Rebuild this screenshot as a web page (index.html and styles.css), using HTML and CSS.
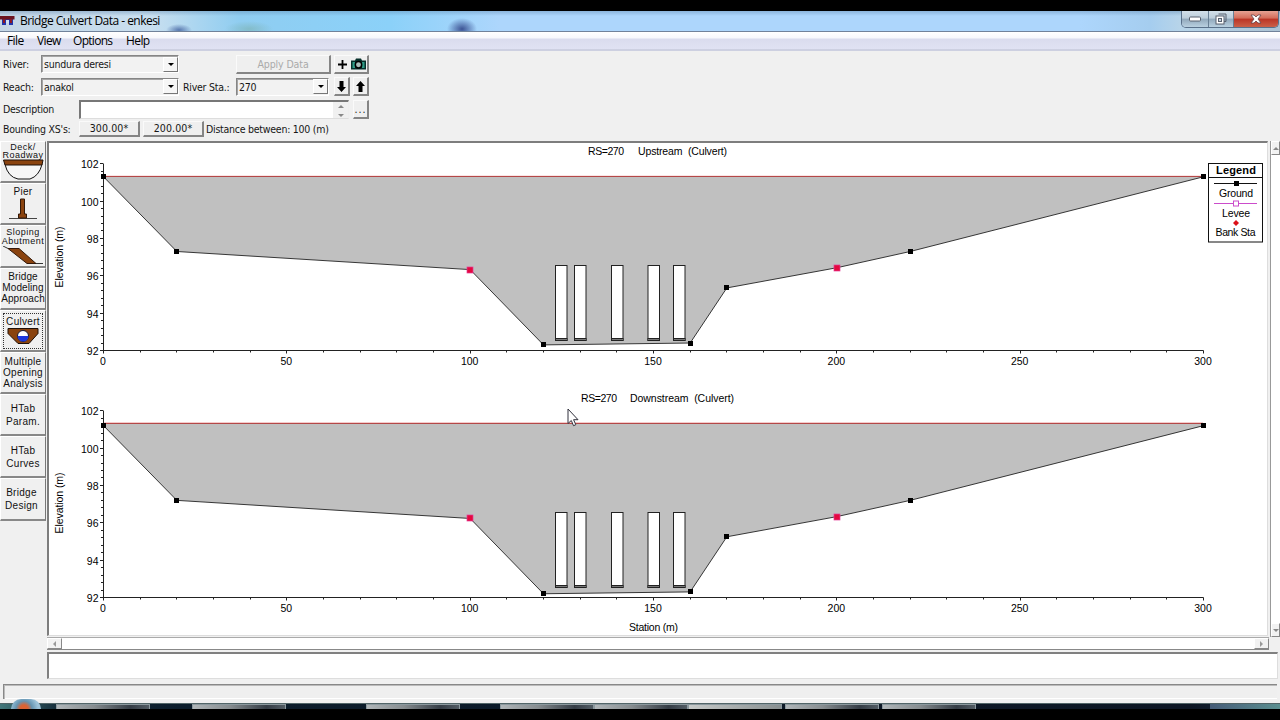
FILE: index.html
```html
<!DOCTYPE html>
<html lang="en">
<head>
    <meta charset="UTF-8" />
    <meta name="viewport" content="width=device-width, initial-scale=1.0" />
    <title>Bridge Culvert Data - enkesi</title>
    <link rel="stylesheet" href="styles.css">
</head>
<body>
    <header class="titlebar">
        <svg class="app-icon" width="15" height="12" viewBox="0 0 15 12">
            <path d="M2 4h11v6H9V7H6v3H2z" fill="#2334a8" />
            <path d="M0 1h14.500v3.500H0z" fill="#6c1420" />
            <path d="M3 4h2v4H3zM10 4h2v4h-2z" fill="#8c1822" />
            <path d="M6 5h3v3H6z" fill="#cfe0f2" />
        </svg>
        <span class="window-title">Bridge Culvert Data - enkesi</span>
        <div class="window-buttons">
            <span class="win-btn">
                <svg width="12" height="6"><rect x="0.5" y="1" width="11" height="4" rx="1" fill="#fff" stroke="#59616f" /></svg>
            </span>
            <span class="win-btn">
                <svg width="12" height="12"><path d="M3.5 1h7.500v7.500H9" fill="none" stroke="#59616f" /><rect x="1" y="3" width="8" height="8" fill="#fff" stroke="#59616f" /><rect x="3.500" y="5.500" width="3" height="3" fill="#c8d4e0" stroke="#59616f" /></svg>
            </span>
            <span class="win-btn close">
                <svg width="12" height="10"><path d="M1 1h3l2 2 2-2h3L8 5l3 4H8L6 7 4 9H1l3-4z" fill="#fff" stroke="#64434a" stroke-width="0.800" /></svg>
            </span>
        </div>
    </header>

    <nav class="menubar">
        <span class="m-file">File</span>
        <span class="m-view">View</span>
        <span class="m-options">Options</span>
        <span class="m-help">Help</span>
    </nav>

    <section class="controls">
        <div class="row">
            <label class="lbl">River:</label>
            <div class="combo">sundura deresi<i class="drop"></i></div>
            <button class="btn apply" disabled>Apply Data</button>
            <button class="btn camera">
                <svg width="31" height="16" viewBox="0 0 31 16">
                    <path d="M2 8.500h9M6.500 4v9" stroke="#000" stroke-width="1.800" />
                    <path d="M15 4.500h4l1-2h5l1 2h4v9H15z" fill="#062f2a" />
                    <path d="M16.500 6h2.500v6h-2.500zM26 6h2.500v6H26z" fill="#2d9c86" />
                    <circle cx="22.500" cy="8.800" r="3.200" fill="#a9bdb9" stroke="#000" stroke-width="1.500" />
                </svg>
            </button>
        </div>
        <div class="row">
            <label class="lbl">Reach:</label>
            <div class="combo">anakol<i class="drop"></i></div>
            <label class="lbl-sta">River Sta.:</label>
            <div class="combo sta">270<i class="drop"></i></div>
            <button class="btn arrow first">
                <svg width="11" height="13"><path d="M3.500 1h4v6H10L5.500 12 1 7h2.500z" /></svg>
            </button>
            <button class="btn arrow">
                <svg width="11" height="13"><path d="M3.500 12h4V6H10L5.500 1 1 6h2.500z" /></svg>
            </button>
        </div>
        <div class="row">
            <label class="lbl wide">Description</label>
            <div class="description">
                <span class="spin"><i class="up"></i><i class="down"></i></span>
            </div>
            <button class="btn dots">...</button>
        </div>
        <div class="row last">
            <label class="lbl wide">Bounding XS's:</label>
            <button class="btn xs">300.00*</button>
            <button class="btn xs">200.00*</button>
            <span class="distance">Distance between: 100 (m)</span>
        </div>
    </section>

    <main>
        <aside class="tools">
            <button class="tool deck">
                <span>Deck/</span>
                <span>Roadway</span>
                <svg width="44" height="22" viewBox="0 0 44 22">
                    <path d="M4 5.500Q7 18 17 20h12Q38 17 41 5.500" fill="#f6f6f6" stroke="#111" />
                    <path d="M2.500 1H42l-1 5H4z" fill="#8a430f" stroke="#1e1008" />
                </svg>
            </button>
            <button class="tool pier">
                <span>Pier</span>
                <svg width="28" height="24" viewBox="0 0 28 24">
                    <path d="M0 21.500h28" stroke="#444" />
                    <path d="M11.500 2h4v15h2v4h-8v-4h2z" fill="#8a430f" stroke="#33190a" />
                </svg>
            </button>
            <button class="tool sloping">
                <span>Sloping</span>
                <span>Abutment</span>
                <svg width="40" height="19" viewBox="0 0 40 19">
                    <path d="M0 0l5 2.500M26 17.500h14" stroke="#333" />
                    <path d="M5 2.500h11l17 15h-9z" fill="#8a430f" stroke="#33190a" />
                </svg>
            </button>
            <button class="tool text3"><span>Bridge<br>Modeling<br>Approach</span></button>
            <button class="tool culvert">
                <span>Culvert</span>
                <svg width="32" height="18" viewBox="0 0 32 18">
                    <path d="M1 1.500h30v5l-9 10H11L1 6.500z" fill="#8a430f" stroke="#1e1008" />
                    <circle cx="16" cy="9" r="5.500" fill="#fff" stroke="#16162e" />
                    <path d="M10.500 9h11a5.500 5.500 0 0 1-11 0z" fill="#1e38dc" />
                </svg>
            </button>
            <button class="tool multi"><span>Multiple<br>Opening<br>Analysis</span></button>
            <button class="tool text2"><span>HTab<br>Param.</span></button>
            <button class="tool text2"><span>HTab<br>Curves</span></button>
            <button class="tool text2 design"><span>Bridge<br>Design</span></button>
        </aside>

        <div class="plot-area">
            <div class="plot-row">
                <svg id="plot" class="plot" viewBox="49 143 1218 492"></svg>
                <div class="vscroll">
                    <span class="scroll-btn"><i class="up"></i></span>
                    <span class="scroll-btn"><i class="down"></i></span>
                </div>
            </div>
            <div class="hscroll">
                <span class="scroll-btn"><i class="left"></i></span>
                <span class="scroll-btn"><i class="right"></i></span>
            </div>
            <div class="message"></div>
        </div>
    </main>

    <footer class="status"></footer>

    <div class="taskbar">
        <span class="orb"></span>
        <span class="task t1"></span>
        <span class="task t2"></span>
        <span class="task t3"></span>
        <span class="task t4"></span>
        <span class="task"></span>
        <span class="task light"></span>
        <span class="task t7"></span>
        <span class="task t7"></span>
        <span class="tray"></span>
    </div>

    <svg class="pointer" width="12" height="20" viewBox="0 0 12 20">
        <path d="M1 1v14.500l3.300-3 2.200 5.200 2.300-1-2.200-5H11z" fill="#fff" stroke="#30303c" />
    </svg>

    <script src="script.js"></script>
</body>
</html>
```

FILE: styles.css
```css
* {
    box-sizing: border-box;
}

body {
    margin: 0;
    width: 1280px;
    height: 720px;
    padding: 11px 0;
    overflow: hidden;
    display: flex;
    flex-direction: column;
    background-color: #000;
    font-family: "DejaVu Sans Condensed", "DejaVu Sans", sans-serif;
    font-stretch: condensed;
    font-size: 10.5px;
    letter-spacing: -0.25px;
    color: #161616;
}

svg {
    display: block;
    flex: none;
}

.titlebar {
    height: 21px;
    flex: none;
    display: flex;
    align-items: flex-start;
    border-bottom: 1px solid #71829a;
    background:
        radial-gradient(ellipse 13px 6px at 179px 19px, rgba(65, 96, 159, 0.8), transparent),
        radial-gradient(ellipse 15px 11px at 462px 18px, #3d5495, transparent),
        radial-gradient(ellipse 24px 8px at 249px 18px, #83bcc9, transparent),
        linear-gradient(rgba(90, 130, 170, 0.4), transparent 5px),
        linear-gradient(90deg, #c3d5e5 0, #c9dfef 150px, #8fcdf1 240px, #8bd1f9 390px, #add6fc 500px, #add6fc 1080px, #a5cdef 1150px, #b7d4e9 1180px, #acc3d4 1280px);
}

.app-icon {
    margin-top: 4px;
}

.window-title {
    margin-left: 5px;
    margin-top: 2px;
    font: 12px/16px "Open Sans", sans-serif;
    letter-spacing: -0.53px;
    color: #000;
}

.window-buttons {
    display: flex;
    margin-left: auto;
    margin-right: 1px;
    height: 17px;
    border: 1px solid #59708a;
    border-top: 0;
    border-radius: 0 0 5px 5px;
    overflow: hidden;
}

.win-btn {
    width: 27px;
    display: flex;
    align-items: center;
    justify-content: center;
    border-right: 1px solid #687f94;
    background: linear-gradient(#d2dfe9, #bccdda 45%, #91a8bb 50%, #b9d0e0);
}

.win-btn + .win-btn {
    width: 25px;
}

.win-btn.close {
    width: 44px;
    border: 0;
    background: linear-gradient(#e5a293, #d36c59 45%, #bb3425 50%, #cb6048);
}

.menubar {
    height: 19px;
    flex: none;
    display: flex;
    padding-left: 7px;
    border-bottom: 2px solid #cdd0e1;
    background: linear-gradient(#fff, #f6f7fc 6px, #dadcee 7px, #e0e2f3);
    font: 12px/18px "Open Sans", sans-serif;
    letter-spacing: -0.6px;
    color: #000;
}

.m-file {
    width: 30px;
}

.m-view {
    width: 36px;
}

.m-options {
    width: 53px;
    letter-spacing: -0.7px;
}

.controls {
    height: 90px;
    flex: none;
    padding: 2px 0 0 3px;
    background-color: #f0f0f0;
}

.row {
    display: flex;
    height: 22.5px;
    align-items: center;
}

.row.last {
    height: 16px;
}

.lbl {
    width: 38px;
    flex: none;
}

.lbl.wide {
    width: 76px;
    white-space: nowrap;
}

.combo {
    width: 138px;
    height: 18px;
    display: flex;
    align-items: center;
    padding-left: 2px;
    border: 1px solid #858585;
    border-right-color: #fff;
    border-bottom-color: #fff;
    box-shadow: inset 1px 1px #a5a5a5;
    background-color: #f2f2f2;
    white-space: nowrap;
}

.drop {
    width: 15px;
    height: 15px;
    margin-left: auto;
    flex: none;
    display: flex;
    align-items: center;
    justify-content: center;
    background-color: #f6f6f6;
    border: 1px solid #fff;
    border-right-color: #777;
    border-bottom-color: #777;
}

.drop::before {
    content: "";
    border: 3.5px solid transparent;
    border-top-color: #000;
    border-bottom: 0;
}

.lbl-sta {
    width: 53px;
    margin-left: 4px;
    white-space: nowrap;
}

.combo.sta {
    width: 93px;
}

.btn {
    height: 19px;
    padding: 0;
    display: flex;
    align-items: center;
    justify-content: center;
    flex: none;
    font: inherit;
    color: #161616;
    background-color: #efefef;
    border: 1px solid #fafafa;
    border-right: 2px solid #858585;
    border-bottom: 2px solid #858585;
}

.apply {
    width: 95px;
    margin-left: 57px;
    color: #aaa;
    letter-spacing: -0.1px;
}

.camera {
    width: 35px;
    margin-left: 3px;
}

.arrow {
    width: 16px;
    margin-left: 3px;
}

.arrow.first {
    margin-left: 5px;
}

.description {
    width: 270px;
    height: 19px;
    display: flex;
    background-color: #fff;
    border: 1px solid #777;
    border-width: 2px 1px 1px 2px;
    border-right-color: #eee;
    border-bottom-color: #ddd;
}

.spin {
    width: 15px;
    margin-left: auto;
    display: flex;
    flex-direction: column;
    justify-content: space-between;
    align-items: center;
    padding: 3px 0 1px;
    background-color: #f0f0f0;
}

.up,
.down,
.left,
.right {
    border: 3px solid transparent;
}

.up {
    border-top: 0;
    border-bottom-color: #888;
}

.down {
    border-bottom: 0;
    border-top-color: #888;
}

.left {
    border-left: 0;
    border-right-color: #999;
}

.right {
    border-right: 0;
    border-left-color: #999;
}

.dots {
    width: 16px;
    margin-left: 4px;
    letter-spacing: 1px;
}

.xs {
    width: 61px;
    height: 16px;
    margin-right: 3px;
    letter-spacing: 0.1px;
}

.distance {
    margin-left: -1px;
    white-space: nowrap;
}

main {
    display: flex;
    height: 540px;
    flex: none;
    background-color: #f0f0f0;
}

.tools {
    width: 46px;
    margin-right: 1px;
    flex: none;
}

.tool {
    width: 46px;
    height: 42.2px;
    padding: 0;
    display: flex;
    flex-direction: column;
    align-items: center;
    font: 10px/11px "Liberation Sans", sans-serif;
    letter-spacing: 0.3px;
    text-align: center;
    color: #111;
    background-color: #f0f0f0;
    border: 1px solid #fff;
    border-right: 1px solid #777;
    border-bottom: 2px solid #888;
}

.deck {
    font-size: 9px;
    line-height: 8px;
    padding-top: 1px;
    letter-spacing: 0.5px;
}

.pier span {
    margin-top: 2px;
}

.sloping {
    font-size: 9px;
    line-height: 9px;
    padding-top: 2px;
    letter-spacing: 0.5px;
}

.text3 {
    line-height: 11.3px;
    padding-top: 2px;
    letter-spacing: 0.1px;
}

.multi {
    padding-top: 3px;
}

.culvert {
    height: 42px;
    outline: 1px dotted #333;
    outline-offset: -4px;
    padding-top: 5px;
}

.text2 {
    line-height: 13px;
    padding-top: 7px;
}

.design {
    padding-right: 3px;
}

.plot-area {
    flex: 1;
    display: flex;
    flex-direction: column;
}

.plot-row {
    height: 496px;
    display: flex;
}

.plot {
    width: 1221px;
    height: 495px;
    border: 2px solid #7d7d7d;
    border-right: 1px solid #ddd;
    border-bottom: 1px solid #ddd;
    background-color: #fff;
    font: 10.5px "Liberation Sans", sans-serif;
    letter-spacing: 0;
}

.vscroll {
    flex: 1;
    margin-left: 2px;
    display: flex;
    flex-direction: column;
    justify-content: space-between;
    border-left: 1px solid #999;
    background-color: #fff;
}

.scroll-btn {
    width: 15px;
    height: 14px;
    display: flex;
    align-items: center;
    justify-content: center;
    background-color: #f2f2f2;
    border: 1px solid #fff;
    border-right-color: #888;
    border-bottom-color: #888;
}

.vscroll .scroll-btn {
    width: 100%;
}

.hscroll {
    height: 13px;
    width: 1222px;
    display: flex;
    justify-content: space-between;
    border-top: 1px solid #aaa;
    border-bottom: 1px solid #888;
    background-color: #fff;
}

.hscroll .scroll-btn {
    height: 11px;
}

.message {
    height: 27px;
    width: 1231px;
    margin-top: 2px;
    background-color: #fff;
    border: 1px solid #ddd;
    border-top: 2px solid #808080;
    border-left: 2px solid #808080;
}

.status {
    height: 22px;
    flex: none;
    border: 3px solid #f0f0f0;
    border-top-width: 3px;
    border-bottom-width: 4px;
    background-color: #efefef;
    box-shadow: inset 1px 1px #888, inset 2px 2px #bbb, inset 0 -1px #fff;
}

.taskbar {
    height: 6px;
    flex: none;
    display: flex;
    align-items: flex-end;
    border-top: 1px solid #526568;
    background: linear-gradient(90deg, #42777a, #142a38 60px, #0b1c2b 180px, #0d1624 1190px, #172c40);
}

.orb {
    width: 30px;
    height: 10px;
    margin-left: 11px;
    border-radius: 15px 15px 0 0;
    background: radial-gradient(circle at 13px 10px, #da6333 0 4px, #6594b1 8px, #9cc2d9 14px);
}

.task {
    width: 94px;
    height: 5px;
    border: 1px solid #8b989e;
    border-bottom: 0;
    background: linear-gradient(90deg, #b0b6b9, #878d90 40%, #343c45 80%, #525c64);
}

.t1 {
    margin-left: 15px;
}

.t2 {
    margin-left: 42px;
}

.t3 {
    margin-left: 80px;
}

.t4 {
    margin-left: 40px;
}

.task.light {
    background: linear-gradient(90deg, #c7cac9, #888f90);
}

.t7 {
    margin-left: 3px;
}

.tray {
    width: 70px;
    height: 5px;
    margin-left: auto;
    background: linear-gradient(90deg, #465c78, #5b8f90);
}

/* mouse pointer over the plot */
.pointer {
    position: absolute;
    left: 567px;
    top: 408px;
}
```

FILE: script.js
```js
const plot = document.getElementById("plot");

const sections = [
    {
        name: "Upstream", titleX: 588, titleY: 155, nameX: 638, nameW: 89, base: 350, top: 177, labelY: 257,
        ground: [[0, 101.3], [20, 97.3], [100, 96.33], [120, 92.3], [160, 92.4], [170, 95.35], [200, 96.43], [220, 97.3], [300, 101.3]],
    },
    {
        name: "Downstream", titleX: 581, titleY: 402, nameX: 630, nameW: 104, base: 597, top: 423.5, labelY: 503,
        ground: [[0, 101.2], [20, 97.2], [100, 96.23], [120, 92.2], [160, 92.3], [170, 95.25], [200, 96.33], [220, 97.2], [300, 101.2]],
    },
];
const culverts = [555.5, 574.5, 611.5, 648, 673.5];

const px = (sta) => 103.5 + (sta * 1100) / 300;

function text(x, y, str, extra = "") {
    return `<text x="${x}" y="${y}" ${extra}>${str}</text>`;
}

function drawSection(s) {
    const base = s.base + 0.5;
    const py = (e) => base - (e - 92) * 18.68;
    const pts = s.ground.map(([x, e]) => `${px(x)},${py(e)}`);
    let out = `<polygon points="103.5,${s.top} ${pts.join(" ")} 1203.5,${s.top}" fill="#c0c0c0" />`;

    out += `<path d="M103.5 ${s.top - 1}H1203" stroke="#f5cccc" />`;
    out += `<path d="M103.5 ${Math.floor(s.top) + 0.5 - (s.base === 350 ? 1 : 0)}H1203" stroke="#b44848" />`;
    out += `<polyline points="${pts.join(" ")}" fill="none" stroke="#222" stroke-width="0.9" />`;

    culverts.forEach((x) => {
        const y = s.base - 84.5;
        out += `<rect x="${x}" y="${y}" width="11.5" height="75" fill="#fff" stroke="#222" />`;
        out += `<rect x="${x}" y="${y + 73}" width="11.5" height="2" fill="#777" stroke="#222" />`;
    });

    // axes, minor ticks every 0.4 m and 10 m
    let ticks = `M103.5 ${base - 187}V${base}M103 ${base}H1203.5`;
    for (let i = 0; i <= 25; i++) {
        const y = Math.round(s.base - i * 7.47) + 0.5;
        ticks += `M${i % 5 ? 101 : 100} ${y}H103`;
    }
    for (let i = 0; i <= 30; i++) {
        ticks += `M${Math.floor(px(i * 10)) + 0.5} ${base}v${i % 5 ? 2 : 3}`;
    }
    out += `<path d="${ticks}" fill="none" stroke="#222" />`;
    for (let e = 92; e <= 102; e += 2) {
        out += text(98.5, py(e) + 4.5, e, 'text-anchor="end"');
    }
    for (let x = 0; x <= 300; x += 50) {
        out += text(px(x) - 0.5, base + 14.5, x, 'text-anchor="middle"');
    }

    s.ground.forEach(([x, e]) => {
        const bank = x === 100 || x === 200;
        const r = bank ? 3 : 2.5;
        out += `<rect x="${Math.round(px(x) - r)}" y="${Math.round(py(e) - r)}" width="${r * 2}" height="${r * 2}" fill="${bank ? "#e4093e" : "#000"}" ${bank ? 'stroke="#e43c97" stroke-width="0.7"' : ""} />`;
    });

    out += text(s.titleX, s.titleY, "RS=270", 'textLength="36"');
    out += text(s.nameX, s.titleY, `${s.name}&#160; (Culvert)`, `textLength="${s.nameW}"`);
    out += text(0, 0, "Elevation (m)", `text-anchor="middle" textLength="61" transform="translate(63 ${s.labelY}) rotate(-90)"`);
    return out;
}

function drawLegend() {
    return `
        <rect x="1208.5" y="163.500" width="54" height="78.500" fill="#fff" stroke="#111" />
        <path d="M1208 177.500h55M1214 183.500h43" stroke="#111" />
        <rect x="1234" y="181" width="5" height="5" />
        <path d="M1214 203.500h43" stroke="#cb4ccb" />
        <rect x="1233.500" y="201" width="5" height="5" fill="#fff" stroke="#cb4ccb" />
        <path d="M1236 220l3 3-3 3-3-3z" fill="#dc1018" />
        ${text(1216, 174, "Legend", 'textLength="40" font-weight="bold" font-size="11"')}
        ${text(1219, 197, "Ground", 'textLength="34"')}
        ${text(1222, 217, "Levee", 'textLength="28"')}
        ${text(1215.5, 236, "Bank Sta", 'textLength="40"')}`;
}

plot.innerHTML = sections.map(drawSection).join("") +
    text(629, 631, "Station (m)", 'textLength="49"') + drawLegend();
```
